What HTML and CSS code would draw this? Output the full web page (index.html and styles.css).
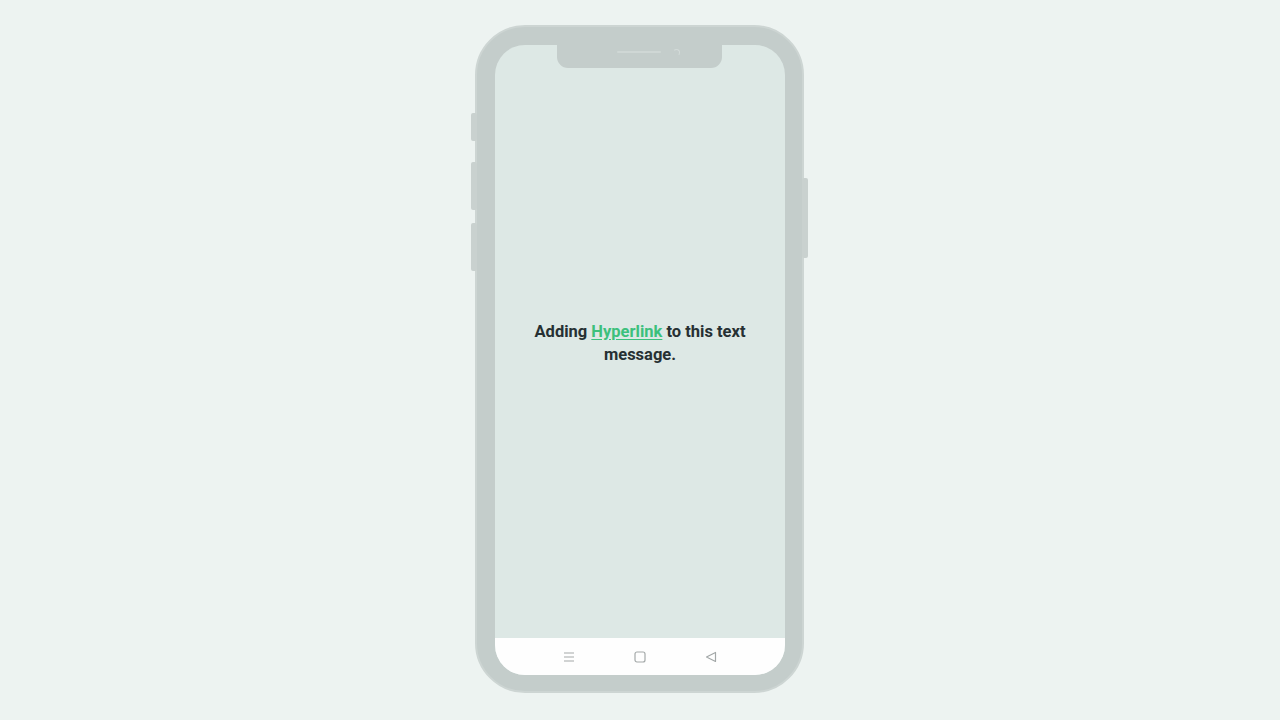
FILE: index.html
```html
<!DOCTYPE html>
<html lang="en">
<head>
<meta charset="utf-8">
<title>Hyperlink</title>
<link rel="stylesheet" href="styles.css">
</head>
<body>
<div class="stage">
  <div class="phone">
    <span class="btn btn-l1"></span>
    <span class="btn btn-l2"></span>
    <span class="btn btn-l3"></span>
    <span class="btn btn-r1"></span>
    <div class="frame">
      <div class="screen">
        <div class="notch"><span class="speaker"></span><span class="camera"></span></div>
        <div class="content">
          <p class="message">Adding <a href="#" class="link">Hyperlink</a> to this text message.</p>
        </div>
        <div class="navbar">
          <svg class="nav-icon" width="12" height="12" viewBox="0 0 12 12"><path d="M1 2h10M1 6h10M1 10h10" stroke="#a3a8a8" stroke-width="1.2" fill="none"/></svg>
          <svg class="nav-icon" width="12" height="12" viewBox="0 0 12 12"><rect x="1" y="1" width="10" height="10" rx="2" stroke="#a3a8a8" stroke-width="1.2" fill="none"/></svg>
          <svg class="nav-icon" width="12" height="12" viewBox="0 0 12 12"><path d="M10.5 1.5v9L1.5 6z" stroke="#a3a8a8" stroke-width="1.2" fill="none" stroke-linejoin="round"/></svg>
        </div>
      </div>
    </div>
  </div>
</div>
</body>
</html>
```
FILE: styles.css
```css
html, body {
  margin: 0;
  padding: 0;
}
body {
  background: #edf3f1;
  font-family: Roboto, "Liberation Sans", sans-serif;
  width: 1280px;
  height: 720px;
  overflow: hidden;
}
.stage {
  height: 720px;
  display: flex;
  justify-content: center;
  align-items: flex-start;
  padding-top: 25px;
  box-sizing: border-box;
}
.phone {
  position: relative;
  width: 329px;
  height: 668px;
  margin-left: -1px;
}
.frame {
  width: 100%;
  height: 100%;
  box-sizing: border-box;
  border-radius: 50px;
  background: #c4cdcb;
  border: 2px solid #cdd5d3;
  padding: 18px 18px 16px 18px;
}
.screen {
  position: relative;
  width: 290px;
  height: 630px;
  background: #dde8e5;
  border-radius: 30px;
  overflow: hidden;
  display: flex;
  flex-direction: column;
}
.notch {
  position: absolute;
  top: 0;
  left: 62px;
  width: 165px;
  height: 23px;
  background: #c4cdcb;
  border-radius: 0 0 11px 11px;
}
.speaker {
  position: absolute;
  top: 6px;
  left: 60px;
  width: 44px;
  height: 2px;
  border-radius: 1px;
  background: #cfd7d5;
}
.camera {
  position: absolute;
  top: 4px;
  left: 116px;
  width: 5px;
  height: 5px;
  border-radius: 50%;
  border: 1px solid #d3dbd9;
  border-left-color: transparent;
  border-bottom-color: transparent;
}
.content {
  flex: 1;
  display: flex;
  align-items: center;
  justify-content: center;
  padding: 2px 28px 0;
}
.message {
  margin: 0;
  text-align: center;
  font-size: 16.5px;
  font-weight: 700;
  line-height: 23px;
  color: #263033;
}
.link {
  color: #3cc07c;
  text-decoration: underline;
  text-underline-offset: 2px;
}
.navbar {
  height: 37px;
  background: #fefefe;
  display: flex;
  justify-content: center;
  align-items: center;
  gap: 59px;
}
.nav-icon {
  display: block;
}
.btn {
  position: absolute;
  width: 6px;
  background: #c9d1cf;
  border-radius: 2px;
}
.btn-l1 { left: -4px; top: 88px; height: 28px; }
.btn-l2 { left: -4px; top: 137px; height: 48px; }
.btn-l3 { left: -4px; top: 198px; height: 48px; }
.btn-r1 { right: -4px; top: 153px; height: 80px; }
```
